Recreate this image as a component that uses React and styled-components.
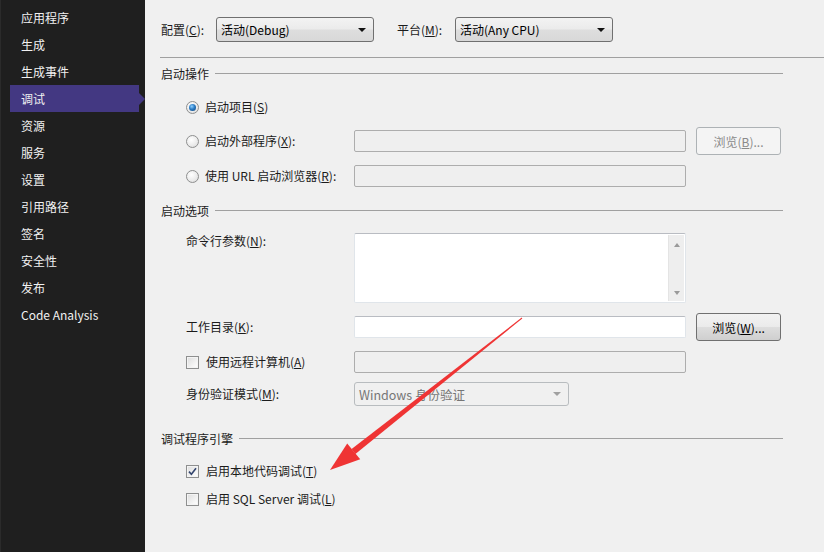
import React from "react";
import styled, { createGlobalStyle, css } from "styled-components";

const GlobalStyle = createGlobalStyle`
  html, body {
    margin: 0;
    padding: 0;
    background: #f0f0f0;
  }
  * {
    box-sizing: border-box;
  }
  body {
    font-family: "Noto Sans CJK SC", "Noto Sans", sans-serif;
    font-size: 12px;
    color: #1b1b1b;
  }
`;

const Window = styled.div`
  position: relative;
  display: flex;
  width: 824px;
  height: 552px;
  overflow: hidden;
`;

const Sidebar = styled.div`
  width: 145px;
  flex-shrink: 0;
  background: #1f1f1f;
  border-left: 1px solid #2b2b2b;
  padding-top: 4px;
`;

const NavItem = styled.div`
  position: relative;
  height: 27px;
  line-height: 27px;
  margin-left: 9px;
  width: 129px;
  padding-left: 11px;
  color: #f1f1f1;
  font-size: 12px;
  white-space: nowrap;
  ${(p) =>
    p.$active &&
    css`
      background: #433882;
      &::after {
        content: "";
        position: absolute;
        right: -6px;
        top: 8px;
        border-top: 6px solid transparent;
        border-bottom: 6px solid transparent;
        border-left: 6px solid #433882;
      }
    `}
`;

const Main = styled.div`
  flex: 1;
  background: #f0f0f0;
  padding-top: 17px;
`;

const TopBar = styled.div`
  display: flex;
  align-items: center;
  height: 25px;
  padding-left: 16px;
`;

const BarLabel = styled.span`
  width: ${(p) => p.$w}px;
  margin-left: ${(p) => p.$ml || 0}px;
  white-space: nowrap;
`;

const Select = styled.div`
  display: flex;
  align-items: center;
  justify-content: space-between;
  width: ${(p) => p.$w}px;
  height: ${(p) => p.$h || 25}px;
  padding: 0 7px 0 4px;
  border-radius: 3px;
  white-space: nowrap;
  ${(p) =>
    p.$disabled
      ? css`
          border: 1px solid #b8bcbf;
          background: #f0f0f0;
          color: #767676;
          font-size: 12.5px;
        `
      : css`
          border: 1px solid #707070;
          background: linear-gradient(#f3f3f3 0%, #ebebeb 48%, #dedede 52%, #d8d8d8 100%);
          color: #000;
        `}
`;

const Caret = styled.span`
  width: 0;
  height: 0;
  border-left: 4px solid transparent;
  border-right: 4px solid transparent;
  border-top: 4px solid ${(p) => (p.$disabled ? "#a0a0a0" : "#111")};
`;

const TopRule = styled.div`
  margin: 15px 0 0 15px;
  height: 1px;
  background: #a0a0a0;
`;

const Content = styled.div`
  padding: 0 41px 0 16px;
`;

const SectionHeader = styled.div`
  display: flex;
  align-items: center;
  gap: 6px;
  height: 16px;
  margin-top: ${(p) => p.$mt}px;
  white-space: nowrap;
  &::after {
    content: "";
    flex: 1;
    height: 1px;
    background: #a0a0a0;
  }
`;

const Row = styled.div`
  display: flex;
  align-items: ${(p) => (p.$top ? "flex-start" : "center")};
  height: ${(p) => p.$h}px;
  margin-top: ${(p) => p.$mt}px;
  padding-left: 25px;
`;

const LabelCell = styled.label`
  display: flex;
  align-items: center;
  width: 168px;
  flex-shrink: 0;
  line-height: 16px;
  white-space: nowrap;
`;

const Radio = styled.span`
  position: relative;
  width: 13px;
  height: 13px;
  margin-right: 6px;
  border-radius: 50%;
  border: 1px solid #8e8f8f;
  background: radial-gradient(circle at 40% 35%, #ffffff 0%, #eaeaea 60%, #d2d2d2 100%);
  ${(p) =>
    p.$checked &&
    css`
      &::after {
        content: "";
        position: absolute;
        left: 2px;
        top: 2px;
        width: 7px;
        height: 7px;
        border-radius: 50%;
        background: radial-gradient(circle at 40% 35%, #8fd0ff 0%, #2a7bc4 45%, #0d3f73 100%);
      }
    `}
`;

const Check = styled.span`
  display: inline-flex;
  align-items: center;
  justify-content: center;
  width: 13px;
  height: 13px;
  margin-right: 7px;
  border: 1px solid #8e8f8f;
  background: linear-gradient(135deg, #dcdcdc 0%, #f6f6f6 70%, #ffffff 100%);
  box-shadow: inset 0 0 0 1px #f4f4f4;
`;

const TextBox = styled.div`
  width: ${(p) => p.$w || 332}px;
  height: ${(p) => p.$h || 22}px;
  border-radius: 2px;
  ${(p) =>
    p.$disabled
      ? css`
          border: 1px solid #adadad;
          background: #efefef;
        `
      : css`
          border: 1px solid #e0e5ea;
          border-top-color: #b9bcc2;
          background: #ffffff;
        `}
`;

const MultiBox = styled(TextBox)`
  display: flex;
  justify-content: flex-end;
  padding: 1px;
`;

const ScrollTrack = styled.div`
  display: flex;
  flex-direction: column;
  justify-content: space-between;
  align-items: center;
  width: 16px;
  padding: 8px 0 6px;
  background: #eeeeee;
  border-left: 1px solid #e4e4e4;
`;

const ScrollArrow = styled.span`
  width: 0;
  height: 0;
  border-left: 3px solid transparent;
  border-right: 3px solid transparent;
  ${(p) =>
    p.$up
      ? css`border-bottom: 4px solid #9a9a9a;`
      : css`border-top: 4px solid #9a9a9a;`}
`;

const Button = styled.div`
  display: flex;
  align-items: center;
  justify-content: center;
  width: 85px;
  height: 28px;
  margin-left: 10px;
  border-radius: 3px;
  white-space: nowrap;
  ${(p) =>
    p.$disabled
      ? css`
          border: 1px solid #adb2b5;
          background: #f4f4f4;
          color: #8a8a8a;
        `
      : css`
          border: 1px solid #707070;
          background: linear-gradient(#f2f2f2 0%, #ebebeb 48%, #dddddd 52%, #cfcfcf 100%);
          color: #000;
        `}
`;

const Overlay = styled.svg`
  position: absolute;
  left: 0;
  top: 0;
  pointer-events: none;
`;

const navItems = [
  "应用程序",
  "生成",
  "生成事件",
  "调试",
  "资源",
  "服务",
  "设置",
  "引用路径",
  "签名",
  "安全性",
  "发布",
  "Code Analysis",
];

function CheckBox({ checked }) {
  return (
    <Check>
      {checked && (
        <svg width="9" height="9" viewBox="0 0 9 9">
          <path d="M1 4.6 L3.4 7.2 L8 1.2" fill="none" stroke="#33456e" strokeWidth="1.6" />
        </svg>
      )}
    </Check>
  );
}

function RedArrow() {
  // shaft tapers from the far end to the head base, head points down-left
  return (
    <Overlay width="824" height="552" viewBox="0 0 824 552">
      <polygon points="522.3,318.4 521.7,317.6 351.6,448.9 355.4,453.9" fill="#ef3434" />
      <polygon points="330,470 347.2,443.6 360.2,459.2" fill="#ef3434" />
    </Overlay>
  );
}

export default function App() {
  return (
    <>
      <GlobalStyle />
      <Window>
        <Sidebar>
          {navItems.map((item) => (
            <NavItem key={item} $active={item === "调试"}>
              {item}
            </NavItem>
          ))}
        </Sidebar>
        <Main>
          <TopBar>
            <BarLabel $w={55}>
              配置(<u>C</u>):
            </BarLabel>
            <Select $w={158}>
              活动(Debug)
              <Caret />
            </Select>
            <BarLabel $w={58} $ml={23}>
              平台(<u>M</u>):
            </BarLabel>
            <Select $w={158}>
              活动(Any CPU)
              <Caret />
            </Select>
          </TopBar>
          <TopRule />
          <Content>
            <SectionHeader $mt={7}>启动操作</SectionHeader>
            <Row $h={28} $mt={12}>
              <LabelCell>
                <Radio $checked />
                启动项目(<u>S</u>)
              </LabelCell>
            </Row>
            <Row $h={28} $mt={6}>
              <LabelCell>
                <Radio />
                启动外部程序(<u>X</u>):
              </LabelCell>
              <TextBox $disabled />
              <Button $disabled>
                浏览(<u>B</u>)...
              </Button>
            </Row>
            <Row $h={28} $mt={7}>
              <LabelCell>
                <Radio />
                使用 URL 启动浏览器(<u>R</u>):
              </LabelCell>
              <TextBox $disabled />
            </Row>

            <SectionHeader $mt={12}>启动选项</SectionHeader>
            <Row $h={70} $mt={15} $top>
              <LabelCell>
                命令行参数(<u>N</u>):
              </LabelCell>
              <MultiBox $h={70}>
                <ScrollTrack>
                  <ScrollArrow $up />
                  <ScrollArrow />
                </ScrollTrack>
              </MultiBox>
            </Row>
            <Row $h={28} $mt={10}>
              <LabelCell>
                工作目录(<u>K</u>):
              </LabelCell>
              <TextBox />
              <Button>
                浏览(<u>W</u>)...
              </Button>
            </Row>
            <Row $h={28} $mt={7}>
              <LabelCell>
                <CheckBox />
                使用远程计算机(<u>A</u>)
              </LabelCell>
              <TextBox $disabled />
            </Row>
            <Row $h={28} $mt={4}>
              <LabelCell>
                身份验证模式(<u>M</u>):
              </LabelCell>
              <Select $w={215} $h={24} $disabled>
                Windows 身份验证
                <Caret $disabled />
              </Select>
            </Row>

            <SectionHeader $mt={22}>调试程序引擎</SectionHeader>
            <Row $h={22} $mt={14}>
              <LabelCell>
                <CheckBox checked />
                启用本地代码调试(<u>T</u>)
              </LabelCell>
            </Row>
            <Row $h={22} $mt={6}>
              <LabelCell>
                <CheckBox />
                启用 SQL Server 调试(<u>L</u>)
              </LabelCell>
            </Row>
          </Content>
        </Main>
        <RedArrow />
      </Window>
    </>
  );
}
